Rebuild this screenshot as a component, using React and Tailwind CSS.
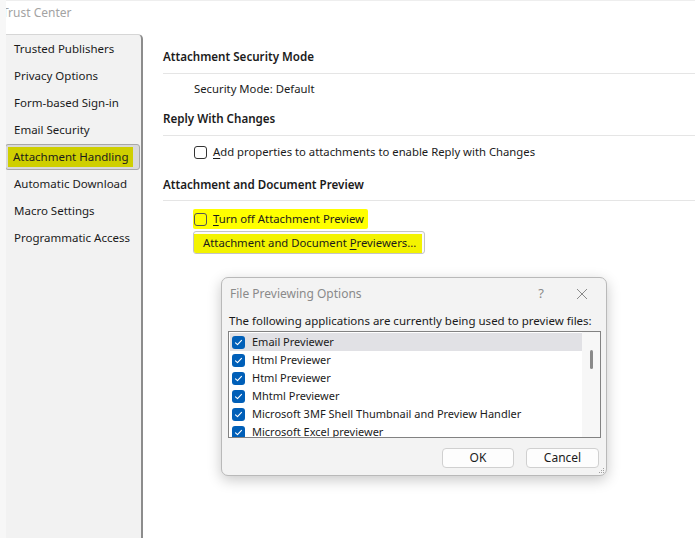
import { useState } from 'react';

const navItems = [
  'Trusted Publishers',
  'Privacy Options',
  'Form-based Sign-in',
  'Email Security',
  'Attachment Handling',
  'Automatic Download',
  'Macro Settings',
  'Programmatic Access',
];

const previewers = [
  'Email Previewer',
  'Html Previewer',
  'Html Previewer',
  'Mhtml Previewer',
  'Microsoft 3MF Shell Thumbnail and Preview Handler',
  'Microsoft Excel previewer',
];

const BlueCheck = () => (
  <span className="flex items-center justify-center w-[13px] h-[13px] rounded-[3px] bg-[#005fb8] shrink-0">
    <svg width="9" height="9" viewBox="0 0 9 9" fill="none">
      <path d="M1.5 4.8 L3.5 6.7 L7.5 2.3" stroke="white" strokeWidth="1.1" strokeLinecap="round" strokeLinejoin="round" />
    </svg>
  </span>
);

const SectionHeader = ({ children, className = '' }) => (
  <div className={`font-semibold text-[11.6px] leading-[20px] text-[#1b1b1b] border-b border-[#e5e5e5] ${className}`}>
    {children}
  </div>
);

const App = () => {
  const [selected] = useState('Attachment Handling');

  return (
    <div
      className="relative w-[695px] h-[538px] overflow-hidden bg-white flex text-[#1b1b1b]"
      style={{ fontFamily: '"Noto Sans", "Open Sans", sans-serif' }}
    >
      {/* left strip */}
      <div className="w-[6px] h-full bg-[#f7f7f7] shrink-0 relative z-10" />

      <div className="flex-1 flex flex-col">
        {/* title */}
        <div className="h-[34px] border-t border-[#eeeeee] shrink-0">
          <div className="-ml-[4px] pt-[3px] text-[12px] leading-[18px] text-[#a3a3a3]">Trust Center</div>
        </div>

        <div className="flex flex-1">
          {/* sidebar */}
          <div className="w-[137px] shrink-0 bg-[#f2f2f2] border-r-2 border-t border-r-[#8c8c8c] border-t-[#d6d6d6] rounded-tr-[5px]">
            {navItems.map((item) => (
              <div key={item} className="h-[27px] flex items-center">
                {item === selected ? (
                  <div className="w-[135px] h-[26px] flex items-center bg-[#d9d9d9] border border-[#a8a8a8] rounded-[3px] -ml-[1px]">
                    <span className="ml-[2px] px-[5px] bg-[#cfcf00] text-[11.5px] leading-[20px] text-[#1b1b1b]">{item}</span>
                  </div>
                ) : (
                  <span className="pl-[8px] text-[11.5px] leading-[20px]">{item}</span>
                )}
              </div>
            ))}
          </div>

          {/* content */}
          <div className="flex-1 pl-[20px] text-[11.3px]">
            <SectionHeader className="pt-[13px] pb-[6px]">Attachment Security Mode</SectionHeader>
            <div className="mt-[5px] ml-[31px] leading-[20px]">Security Mode: Default</div>

            <SectionHeader className="mt-[10px] pb-[6px]">Reply With Changes</SectionHeader>
            <div className="mt-[6px] ml-[31px] flex items-center gap-[6px] leading-[20px]">
              <span className="w-[13px] h-[13px] border border-[#333] rounded-[3px] bg-white" />
              <span>
                <span className="underline underline-offset-2">A</span>dd properties to attachments to enable Reply with Changes
              </span>
            </div>

            <SectionHeader className="mt-[13px] pb-[5px]">Attachment and Document Preview</SectionHeader>
            <div className="mt-[8px] ml-[30px] flex">
              <div className="flex items-center gap-[6px] leading-[20px] bg-[#ffff00] pl-[1px] pr-[4px] rounded-[2px]">
                <span className="w-[13px] h-[13px] border border-[#555] rounded-[3px] bg-[#ffff00]" />
                <span>
                  <span className="underline underline-offset-2">T</span>urn off Attachment Preview
                </span>
              </div>
            </div>
            <div className="mt-[2px] ml-[30px] w-[232px] h-[23px] bg-[#fbfbfb] border border-[#c4c4c4] rounded-[3px] flex items-end overflow-hidden">
              <span className="h-[19px] pl-[9px] pr-[6px] bg-[#f3f300] leading-[18px] whitespace-nowrap">
                Attachment and Document <span className="underline underline-offset-2">P</span>reviewers...
              </span>
            </div>
          </div>
        </div>
      </div>

      {/* dialog */}
      <div className="absolute left-[221px] top-[277px] w-[386px] h-[199px] bg-[#f3f3f3] border border-[#b9b9b9] rounded-[7px] shadow-[0_4px_14px_rgba(0,0,0,0.22)] flex flex-col">
        <div className="h-[32px] flex items-center pl-[8px] shrink-0">
          <span className="flex-1 text-[12px] text-[#8a8a8a]">File Previewing Options</span>
          <span className="w-[20px] text-center text-[13px] text-[#8a8a8a] mr-[25px]">?</span>
          <svg width="12" height="12" viewBox="0 0 12 12" className="mr-[18px]">
            <path d="M1 1 L11 11 M11 1 L1 11" stroke="#8a8a8a" strokeWidth="1" />
          </svg>
        </div>
        <div className="pl-[7px] mt-[2px] text-[11.5px] leading-[18px] text-[#1a1a1a]">
          The following applications are currently being used to preview files:
        </div>
        <div className="mt-[1px] ml-[6px] w-[373px] h-[107px] bg-white border border-[#828282] flex overflow-hidden">
          <div className="flex-1 pt-[1px] pl-[1px]">
            {previewers.map((p, i) => (
              <div
                key={i}
                className={`h-[18px] flex items-center gap-[7px] pl-[2px] text-[11px] ${i === 0 ? 'bg-[#e1e1e5]' : ''}`}
              >
                <BlueCheck />
                <span className="whitespace-nowrap">{p}</span>
              </div>
            ))}
          </div>
          <div className="w-[18px] bg-[#f7f7f7] flex justify-center pt-[18px] shrink-0">
            <div className="w-[3px] h-[19px] bg-[#8a8a8a] rounded-full" />
          </div>
        </div>
        <div className="flex justify-end gap-[12px] mt-[10px] pr-[7px]">
          <button className="w-[72px] h-[20px] bg-[#fdfdfd] border border-[#d0d0d0] rounded-[4px] text-[12px] leading-[18px] text-[#1b1b1b]">
            OK
          </button>
          <button className="w-[73px] h-[20px] bg-[#fdfdfd] border border-[#d0d0d0] rounded-[4px] text-[12px] leading-[18px] text-[#1b1b1b]">
            Cancel
          </button>
        </div>
        <div className="absolute right-[2px] bottom-[2px] grid grid-cols-3 gap-[1px]">
          {[0, 0, 1, 0, 1, 1, 1, 1, 1].map((v, i) => (
            <span key={i} className={`w-[1px] h-[1px] ${v ? 'bg-[#a0a0a0]' : ''}`} />
          ))}
        </div>
      </div>
    </div>
  );
};

export default App;
